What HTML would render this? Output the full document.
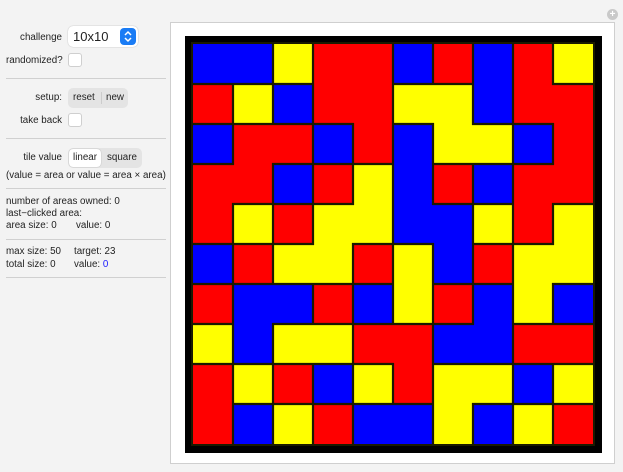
<!DOCTYPE html>
<html><head><meta charset="utf-8"><style>
*{margin:0;padding:0;box-sizing:border-box}
body{width:623px;height:472px;background:#f3f3f3;font-family:"Liberation Sans",sans-serif;font-size:9.8px;color:#222;position:relative;overflow:hidden}
.a{position:absolute;white-space:nowrap}
.r{text-align:right;width:62px;left:0}
.sep{position:absolute;left:6px;width:160px;height:1px;background:#d0d0d0}
.cb{position:absolute;width:14px;height:14px;background:#fff;border:1px solid #cfcfcf;border-radius:3px}
</style></head><body>
<div class="a r" style="top:32px">challenge</div>
<div class="a" style="left:68px;top:26px;width:70px;height:21px;background:#fff;border-radius:5px;box-shadow:0 0 1px #999;font-size:13px;line-height:21px;padding-left:5px">10x10
<svg style="position:absolute;left:52px;top:2px" width="16" height="17"><rect width="16" height="17" rx="4" fill="#1a7cf5"/><path d="M5 7L8 4L11 7M5 10L8 13L11 10" stroke="#fff" stroke-width="1.5" fill="none"/></svg></div>
<div class="a" style="left:6px;top:55px">randomized?</div>
<div class="cb" style="left:68px;top:53px"></div>
<div class="sep" style="top:78px"></div>
<div class="a r" style="top:92px">setup:</div>
<div class="a" style="left:68px;top:88px;width:60px;height:20px;background:#e4e4e4;border-radius:5px;line-height:20px"><span style="position:absolute;left:5px">reset</span><span style="position:absolute;left:33px;top:4px;width:1px;height:12px;background:#ccc"></span><span style="position:absolute;left:38px">new</span></div>
<div class="a r" style="top:115px">take back</div>
<div class="cb" style="left:68px;top:113px"></div>
<div class="sep" style="top:138px"></div>
<div class="a r" style="top:152px">tile value</div>
<div class="a" style="left:68px;top:148px;width:74px;height:20px;background:#e4e4e4;border-radius:5px;line-height:20px">
<span style="position:absolute;left:1px;top:1px;width:32px;height:18px;background:#fff;border-radius:4px;box-shadow:0 0 1px #999;line-height:18px;text-align:center">linear</span><span style="position:absolute;left:39px">square</span></div>
<div class="a" style="left:6px;top:170px">(value = area or value = area × area)</div>
<div class="sep" style="top:188px"></div>
<div class="a" style="left:6px;top:196px">number of areas owned: 0</div>
<div class="a" style="left:6px;top:208px">last−clicked area:</div>
<div class="a" style="left:6px;top:220px">area size: 0</div>
<div class="a" style="left:76px;top:220px">value: 0</div>
<div class="sep" style="top:239px"></div>
<div class="a" style="left:6px;top:246px">max size: 50</div>
<div class="a" style="left:74px;top:246px">target: 23</div>
<div class="a" style="left:6px;top:259px">total size: 0</div>
<div class="a" style="left:74px;top:259px">value: <span style="color:#1a1aff">0</span></div>
<div class="sep" style="top:277px"></div>
<div class="a" style="left:170px;top:22px;width:445px;height:442px;background:#fff;border:1px solid #cfcfcf"></div>
<div class="a" style="left:607px;top:9px;width:11px;height:11px;border-radius:50%;background:#c9c9c9;color:#fff;font-size:10px;line-height:11px;text-align:center;font-weight:bold">+</div>
<svg class="a" style="left:185px;top:36px" width="417" height="417" id="g"></svg>
<script>
var C=["BBYRRBRBRY","RYBRRYYBRR","BRRBRBYYBR","RRBRYBRBRR","RYRYYBBYRY","BRYYRYBRYY","RBBRBYRBYB","YBYYRRBBRR","RYRBYRYYBY","RBYRBBYBYR"];
var G=["aabccdefgh","ijkccllfgg","mnnocpllqg","nnrstpuvgg","nwxttppygz","ABttDEpFzz","GHHIJEKLzM","NHOOPPLLQQ","RSTUVPWWXY","RZ0122W345"];
var col={B:"#0000ff",R:"#ff0000",Y:"#ffff00"};
var s='<rect width="417" height="417" fill="#000"/>';
for(var r=0;r<10;r++)for(var c=0;c<10;c++){s+='<rect x="'+(8+c*40)+'" y="'+(8+r*40)+'" width="40.5" height="40.5" fill="'+col[C[r][c]]+'"/>';}
var L='';
for(var r=0;r<10;r++)for(var c=0;c<10;c++){var x=8+c*40,y=8+r*40;
if(c<9&&G[r][c]!=G[r][c+1])L+='M'+(x+40)+' '+(y-1)+'V'+(y+41);
if(r<9&&G[r][c]!=G[r+1][c])L+='M'+(x-1)+' '+(y+40)+'H'+(x+41);}
s+='<path d="'+L+'" stroke="#1a1a00" stroke-width="2.2" fill="none"/>';
s+='<rect x="7" y="7" width="402" height="402" fill="none" stroke="#1a1a00" stroke-width="2"/>';
document.getElementById('g').innerHTML=s;
</script>
</body></html>
